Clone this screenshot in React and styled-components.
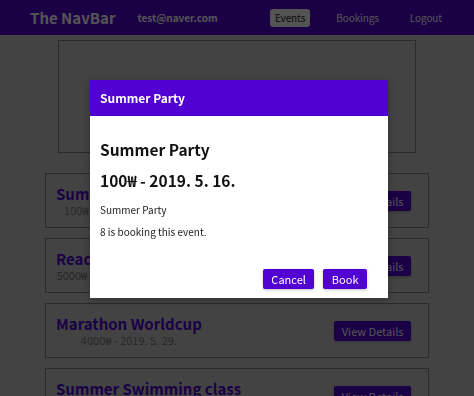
import React from 'react'
import styled, { createGlobalStyle } from 'styled-components'

const events = [
  { id: 1, title: 'Summer Party', price: 100, date: '2019. 5. 16.' },
  { id: 2, title: 'Reading Club', price: 5000, date: '2019. 5. 20.' },
  { id: 3, title: 'Marathon Worldcup', price: 4000, date: '2019. 5. 29.' },
  { id: 4, title: 'Summer Swimming class', price: 3000, date: '2019. 6. 2.' },
]

function App() {
  const selected = events[0]
  return (
    <>
      <GlobalStyle />
      <MainNav>
        <Logo>The NavBar</Logo>
        <Email>test@naver.com</Email>
        <NavItems>
          <NavLink active>Events</NavLink>
          <NavLink>Bookings</NavLink>
          <NavLink>Logout</NavLink>
        </NavItems>
      </MainNav>
      <Main>
        <EventsControl />
        <EventList>
          {events.map(ev => (
            <EventItem key={ev.id}>
              <div>
                <ItemTitle>{ev.title}</ItemTitle>
                <ItemSub>{ev.price}₩ - {ev.date}</ItemSub>
              </div>
              <Button>View Details</Button>
            </EventItem>
          ))}
        </EventList>
      </Main>
      <Backdrop />
      <Modal>
        <ModalHeader>
          <h1>{selected.title}</h1>
        </ModalHeader>
        <ModalContent>
          <BigTitle>{selected.title}</BigTitle>
          <BigTitle as="h2" second>{selected.price}₩ - {selected.date}</BigTitle>
          <Text>Summer Party</Text>
          <Text last>8 is booking this event.</Text>
        </ModalContent>
        <ModalActions>
          <Button small>Cancel</Button>
          <Button small>Book</Button>
        </ModalActions>
      </Modal>
    </>
  )
}

const GlobalStyle = createGlobalStyle`
  html, body {
    margin: 0;
    background: #ccc;
    font-family: "Noto Sans CJK KR", "Noto Sans", sans-serif;
  }
`

const MainNav = styled.header`
  height: 35px;
  background: #5101d1;
  display: flex;
  align-items: center;
  padding: 0 27px 0 30px;
`
const Logo = styled.h1`
  margin: 0;
  font-size: 15px;
  line-height: 20px;
  font-weight: 700;
  color: #fff;
`
const Email = styled.span`
  margin-left: 22px;
  font-size: 10px;
  font-weight: 700;
  color: #fff;
`
const NavItems = styled.nav`
  margin-left: auto;
  display: flex;
  align-items: center;
  gap: 21px;
`
const NavLink = styled.a`
  font-size: 10px;
  letter-spacing: -0.1px;
  line-height: 18px;
  padding: 0 5px;
  border-radius: 3px;
  color: ${p => (p.active ? '#222' : '#fff')};
  background: ${p => (p.active ? '#fff' : 'transparent')};
`
const Main = styled.main`
  padding-top: 5px;
`
const EventsControl = styled.section`
  width: 356px;
  height: 111px;
  margin: 0 auto;
  border: 1px solid #848484;
`
const EventList = styled.ul`
  width: 384px;
  margin: 20px auto 0;
  padding: 0;
  list-style: none;
`
const EventItem = styled.li`
  box-sizing: border-box;
  height: 55px;
  margin-bottom: 10px;
  border: 1px solid #848484;
  display: flex;
  align-items: center;
  justify-content: space-between;
  padding: 0 17px 0 10px;
  text-align: center;
`
const ItemTitle = styled.h1`
  margin: 0;
  font-size: 15px;
  line-height: 19px;
  color: #5101d1;
`
const ItemSub = styled.h2`
  margin: 0;
  font-size: 11px;
  line-height: 14px;
  font-weight: 400;
  color: #777;
`
const Button = styled.button`
  height: 20px;
  padding: 0 ${p => (p.small ? '8.5px' : '7.5px')};
  border: none;
  border-radius: 2px;
  background: #5101d1;
  color: #fff;
  font-family: inherit;
  font-size: 11px;
  box-shadow: 0 1px 3px rgba(0, 0, 0, 0.26);
`
const Backdrop = styled.div`
  position: fixed;
  inset: 0;
  background: rgba(0, 0, 0, 0.67);
  z-index: 10;
`
const Modal = styled.div`
  position: fixed;
  top: 80px;
  left: 90px;
  width: 298px;
  height: 218px;
  background: #fff;
  box-shadow: 0 2px 8px rgba(0, 0, 0, 0.26);
  z-index: 11;
  display: flex;
  flex-direction: column;
`
const ModalHeader = styled.header`
  height: 36px;
  background: #5101d1;
  display: flex;
  align-items: center;
  padding: 0 10px;
  h1 {
    margin: 0;
    font-size: 12px;
    line-height: 18px;
    color: #fff;
  }
`
const ModalContent = styled.section`
  padding: 24px 10px 0;
`
const BigTitle = styled.h1`
  margin: ${p => (p.second ? '12px 0 0' : '0')};
  font-size: 15.5px;
  line-height: 19px;
  font-weight: 700;
  color: #111;
`
const Text = styled.p`
  margin: ${p => (p.last ? '6px 0 0' : '12px 0 0')};
  font-size: 10px;
  line-height: 16px;
  color: #222;
`
const ModalActions = styled.div`
  margin-top: auto;
  display: flex;
  justify-content: flex-end;
  gap: 9px;
  padding: 0 21px 9px;
`

export default App
